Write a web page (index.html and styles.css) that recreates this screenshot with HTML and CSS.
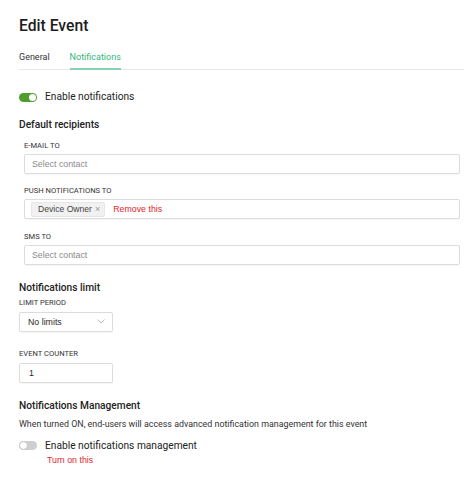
FILE: index.html
```html
<!DOCTYPE html>
<html lang="en">
<head>
<meta charset="utf-8">
<title>Edit Event</title>
<link rel="stylesheet" href="styles.css">
</head>
<body>
<div class="page">
  <h1 class="title">Edit Event</h1>
  <div class="tabs">
    <div class="tab">General</div>
    <div class="tab active">Notifications</div>
  </div>

  <div class="switch-row first-switch">
    <span class="switch on"><span class="knob"></span></span>
    <span class="switch-label">Enable notifications</span>
  </div>

  <h2 class="heading recipients-heading">Default recipients</h2>
  <div class="recipients">
    <div class="field">
      <div class="label">E-MAIL TO</div>
      <div class="input"><span class="placeholder">Select contact</span></div>
    </div>
    <div class="field">
      <div class="label">PUSH NOTIFICATIONS TO</div>
      <div class="input chips">
        <span class="chip">Device Owner <span class="chip-x">×</span></span>
        <span class="note">Remove this</span>
      </div>
    </div>
    <div class="field">
      <div class="label">SMS TO</div>
      <div class="input"><span class="placeholder">Select contact</span></div>
    </div>
  </div>

  <h2 class="heading limit-heading">Notifications limit</h2>
  <div class="label limit-label">LIMIT PERIOD</div>
  <div class="input select">
    <span class="value">No limits</span>
    <svg class="chevron" width="8" height="5" viewBox="0 0 8 5"><path d="M0.5 0.5 L4 4 L7.5 0.5" fill="none" stroke="#b5b5b5" stroke-width="0.9"/></svg>
  </div>
  <div class="label counter-label">EVENT COUNTER</div>
  <div class="input counter"><span class="value">1</span></div>

  <h2 class="heading mgmt-heading">Notifications Management</h2>
  <p class="desc">When turned ON, end-users will access advanced notification management for this event</p>
  <div class="switch-row second-switch">
    <span class="switch off"><span class="knob"></span></span>
    <span class="switch-label">Enable notifications management</span>
  </div>
  <div class="note turn-on">Turn on this</div>
</div>
</body>
</html>
```

FILE: styles.css
```css
html, body {
  margin: 0;
  padding: 0;
  background: #ffffff;
}

body {
  font-family: Roboto, "Liberation Sans", sans-serif;
  color: #222222;
}

.page {
  padding: 16px 10px 0 19px;
}

.title {
  margin: 0 0 15px;
  font-size: 15.7px;
  line-height: 20px;
  font-weight: 500;
  color: #1d1d1d;
}

.tabs {
  display: flex;
  gap: 20px;
  border-bottom: 1px solid #e8e8e8;
}

.tab {
  font-size: 9px;
  line-height: 12px;
  padding-bottom: 5px;
  border-bottom: 2px solid transparent;
  margin-bottom: -1px;
  color: #333333;
}

.tab.active {
  color: #35b57a;
  border-bottom-color: #86d3b1;
}

.switch-row {
  display: flex;
  align-items: center;
  gap: 8px;
  height: 14px;
}

.first-switch {
  margin-top: 20px;
}

.switch {
  width: 18px;
  height: 9px;
  border-radius: 5px;
  box-sizing: border-box;
  display: flex;
  align-items: center;
  padding: 0 1px;
}

.switch.on {
  background: #4f9d2f;
  justify-content: flex-end;
}

.switch.off {
  background: #cfcfcf;
  justify-content: flex-start;
  padding: 0;
}

.knob {
  width: 7px;
  height: 7px;
  border-radius: 50%;
  background: #ffffff;
}

.switch.off .knob {
  width: 9px;
  height: 9px;
  box-sizing: border-box;
  border: 1px solid #c4c4c4;
}

.switch-label {
  font-size: 10.2px;
  line-height: 14px;
  color: #222222;
}

.heading {
  margin: 0;
  font-size: 10.2px;
  line-height: 14px;
  font-weight: 500;
  color: #222222;
}

.recipients-heading {
  margin-top: 14px;
}

.recipients {
  padding: 0 4px 0 5px;
  margin-top: 8.5px;
}

.field + .field {
  margin-top: 12.5px;
}

.label {
  font-size: 7.6px;
  line-height: 10px;
  color: #333333;
  margin-bottom: 3px;
}

.input {
  box-sizing: border-box;
  height: 20px;
  border: 1px solid #dcdcdc;
  border-radius: 2px;
  display: flex;
  align-items: center;
  padding: 0 7px;
  font-family: "Liberation Sans", Arial, sans-serif;
  font-size: 8.8px;
  box-shadow: 0 1px 1px rgba(0, 0, 0, 0.04);
}

.placeholder {
  color: #8a8a8a;
}

.chips {
  padding-left: 6px;
  gap: 8px;
}

.chip {
  display: inline-flex;
  align-items: center;
  gap: 3px;
  height: 15px;
  box-sizing: border-box;
  padding: 0 4px 0 6px;
  background: #f1f1f1;
  border: 1px solid #e6e6e6;
  border-radius: 2px;
  color: #444444;
  font-size: 8.6px;
}

.chip-x {
  color: #999999;
  font-size: 9px;
}

.note {
  font-family: "Liberation Sans", Arial, sans-serif;
  font-size: 8.8px;
  color: #e3262c;
}

.limit-heading {
  margin-top: 16px;
}

.limit-label {
  margin-top: 3px;
  margin-bottom: 4px;
}

.select {
  width: 94px;
  justify-content: space-between;
  padding: 0 7px 0 8px;
}

.value {
  color: #2a2a2a;
}

.chevron {
  display: block;
}

.counter-label {
  margin-top: 17.5px;
  margin-bottom: 3.5px;
}

.counter {
  width: 94px;
  padding-left: 9px;
}

.mgmt-heading {
  margin-top: 16px;
}

.desc {
  margin: 5px 0 0;
  font-size: 8.9px;
  line-height: 12px;
  color: #333333;
}

.second-switch {
  margin-top: 9px;
}

.turn-on {
  margin: 1px 0 0 28px;
  line-height: 12px;
}
```
